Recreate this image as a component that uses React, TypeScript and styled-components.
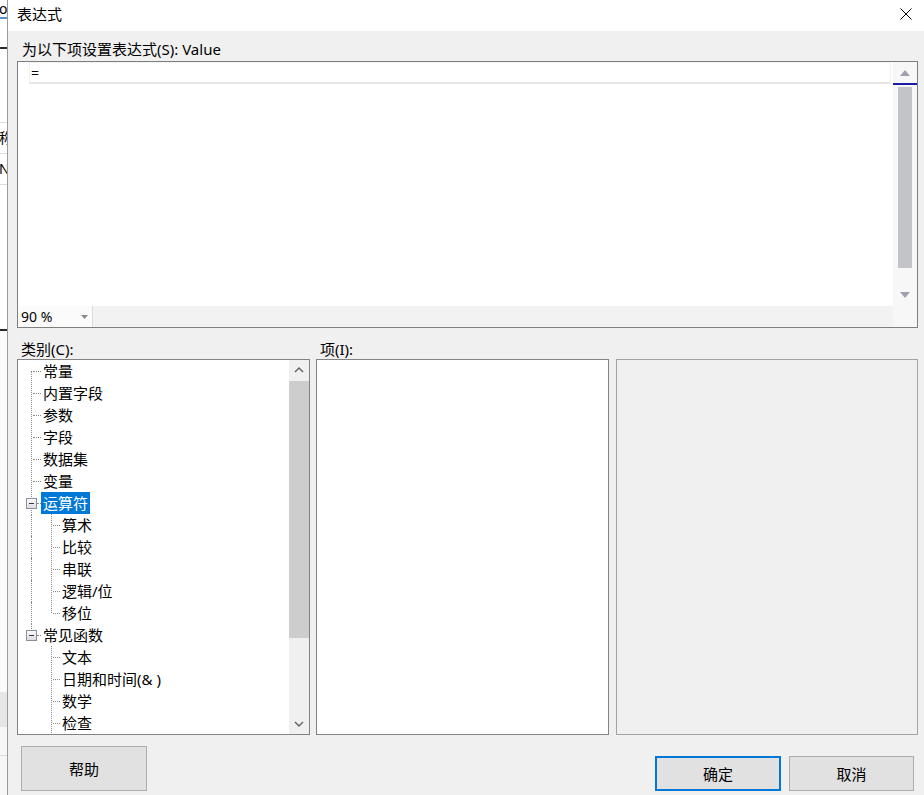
import React from 'react';
import styled, { createGlobalStyle } from 'styled-components';

const GlobalStyles = createGlobalStyle`
  html, body {
    margin: 0;
    padding: 0;
    width: 924px;
    height: 795px;
    overflow: hidden;
    background: #ffffff;
  }
  body {
    font-family: "Noto Sans", "Noto Sans CJK SC", sans-serif;
    font-size: 15px;
    color: #000000;
  }
  #root {
    height: 100%;
  }
`;

const Screen = styled.div`
  display: flex;
  width: 924px;
  height: 795px;
  overflow: hidden;
`;

/* sliver of the window behind the dialog */
const Backdrop = styled.div`
  width: 7px;
  flex-shrink: 0;
  overflow: hidden;
  display: flex;
  flex-direction: column;
  background: #ffffff;
`;

const BackText = styled.div<{ $h: number }>`
  height: ${p => p.$h}px;
  line-height: ${p => p.$h}px;
  font-size: 14px;
  white-space: nowrap;
  margin-left: -1px;
  color: #000;
`;

const BackBlock = styled.div<{ $h: number; $bg?: string }>`
  height: ${p => p.$h}px;
  flex-shrink: 0;
  background: ${p => p.$bg || '#ffffff'};
`;

const Dialog = styled.div`
  flex: 1;
  min-width: 0;
  display: flex;
  flex-direction: column;
  border-left: 1px solid #9a9a9a;
  background: #f0f0f0;
`;

const TitleBar = styled.div`
  height: 31px;
  flex-shrink: 0;
  box-sizing: border-box;
  padding: 0 12px 4px 9px;
  display: flex;
  align-items: center;
  justify-content: space-between;
  background: #ffffff;
`;

const TitleText = styled.span`
  font-size: 15px;
  line-height: 20px;
`;

const CloseButton = styled.span`
  display: flex;
  width: 12px;
  height: 12px;
`;

const Body = styled.div`
  flex: 1;
  display: flex;
  flex-direction: column;
  padding: 0 6px 0 9px;
`;

const PromptLabel = styled.div`
  padding: 8px 0 0 5px;
  height: 20px;
  line-height: 20px;
  margin-bottom: 2px;
  white-space: nowrap;
`;

const ExprBox = styled.div`
  height: 267px;
  box-sizing: border-box;
  border: 1px solid #7f7f7f;
  display: flex;
  background: #f7f7f7;
`;

const EditorColumn = styled.div`
  flex: 1;
  display: flex;
  flex-direction: column;
`;

const Editor = styled.div`
  flex: 1;
  background: #ffffff;
  padding: 0 2px 0 11px;
`;

const CurrentLine = styled.div`
  height: 22px;
  box-sizing: border-box;
  border: 1px solid #f2f2f2;
  border-bottom: 2px solid #e6e6e6;
  padding-left: 1px;
  font-size: 14px;
  line-height: 19px;
`;

const EditorFooter = styled.div`
  height: 21px;
  display: flex;
  background: #f2f2f2;
`;

const ZoomCombo = styled.div`
  width: 75px;
  box-sizing: border-box;
  display: flex;
  align-items: center;
  justify-content: space-between;
  padding: 0 4px 0 3px;
  background: #fbfbfb;
  border-right: 1px solid #dadada;
  font-size: 14px;
  line-height: 21px;
`;

const EditorScroll = styled.div`
  width: 24px;
  display: flex;
  flex-direction: column;
  background: #f7f7f7;
`;

const ScrollArrow = styled.div<{ $h: number }>`
  height: ${p => p.$h}px;
  flex-shrink: 0;
  display: flex;
  align-items: center;
  justify-content: center;
`;

const CaretLine = styled.div`
  height: 2px;
  flex-shrink: 0;
  background: #1b1ba8;
`;

const EditorTrack = styled.div`
  flex: 1;
  padding: 2px 5px 0 5px;
`;

const EditorThumb = styled.div`
  height: 181px;
  background: #c3c4ca;
`;

const Lower = styled.div`
  margin-top: 11px;
  display: grid;
  grid-template-columns: 293px 293px 1fr;
  grid-template-rows: 20px 376px;
  column-gap: 6px;
`;

const PaneLabel = styled.div`
  padding-left: 4px;
  line-height: 20px;
  white-space: nowrap;
`;

const TreeBox = styled.div`
  box-sizing: border-box;
  border: 1px solid #828282;
  background: #ffffff;
  display: flex;
  overflow: hidden;
`;

const TreeList = styled.div`
  flex: 1;
  overflow: hidden;
`;

const TreeRow = styled.div`
  display: flex;
  height: 22px;
`;

const Guide = styled.div<{ $line: boolean }>`
  width: 20px;
  flex-shrink: 0;
  position: relative;
  &::before {
    content: '';
    display: ${p => (p.$line ? 'block' : 'none')};
    position: absolute;
    left: 13px;
    top: 0;
    bottom: 0;
    border-left: 1px dotted #8a8a8a;
  }
`;

const Elbow = styled.div<{ $w: number; $up: boolean; $down: boolean; $box: boolean }>`
  width: ${p => p.$w}px;
  flex-shrink: 0;
  position: relative;
  &::before {
    content: '';
    position: absolute;
    left: 13px;
    top: ${p => (p.$up ? '0' : '11px')};
    bottom: ${p => (p.$down ? '-1px' : '11px')};
    border-left: 1px dotted #8a8a8a;
  }
  &::after {
    content: '';
    position: absolute;
    left: ${p => (p.$box ? '19px' : '15px')};
    right: 0;
    top: 11px;
    border-top: 1px dotted #8a8a8a;
  }
`;

const Expander = styled.span`
  position: absolute;
  z-index: 1;
  left: 8px;
  top: 6px;
  width: 11px;
  height: 11px;
  box-sizing: border-box;
  border: 1px solid #8e8f9c;
  background: linear-gradient(#fafafa, #dcdde4);
  &::before {
    content: '';
    position: absolute;
    left: 2px;
    right: 2px;
    top: 4px;
    height: 1px;
    background: #3a3a46;
  }
`;

const NodeLabel = styled.span<{ $selected?: boolean }>`
  padding: 0 2px;
  line-height: 22px;
  white-space: nowrap;
  background: ${p => (p.$selected ? '#0078d7' : 'transparent')};
  color: ${p => (p.$selected ? '#ffffff' : '#000000')};
`;

const TreeScroll = styled.div`
  width: 20px;
  flex-shrink: 0;
  display: flex;
  flex-direction: column;
  background: #f0f0f0;
`;

const TreeTrack = styled.div`
  flex: 1;
  padding-top: 1px;
`;

const TreeThumb = styled.div`
  height: 257px;
  background: #cdcdcd;
`;

const ItemsBox = styled.div`
  box-sizing: border-box;
  border: 1px solid #828282;
  background: #ffffff;
`;

const DescBox = styled.div`
  margin-left: 1px;
  box-sizing: border-box;
  border: 1px solid #a3a3a3;
  background: #f0f0f0;
`;

const ButtonRow = styled.div`
  display: flex;
  align-items: flex-start;
  padding: 0 4px;
  gap: 8px;
`;

const Spacer = styled.div`
  flex: 1;
`;

const DialogButton = styled.button<{ $top: number; $h: number; $w: number; $primary?: boolean }>`
  margin-top: ${p => p.$top}px;
  width: ${p => p.$w}px;
  height: ${p => p.$h}px;
  box-sizing: border-box;
  padding: 0;
  background: #e1e1e1;
  border: ${p => (p.$primary ? '2px solid #0078d7' : '1px solid #adadad')};
  font-family: "Noto Sans", "Noto Sans CJK SC", sans-serif;
  font-size: 15px;
  line-height: 20px;
  color: #000;
`;

type Node = {
  label: string;
  level: 1 | 2;
  up: boolean;
  down: boolean;
  box?: boolean;
  selected?: boolean;
  guide?: boolean;
};

const nodes: Node[] = [
  { label: '常量', level: 1, up: false, down: true },
  { label: '内置字段', level: 1, up: true, down: true },
  { label: '参数', level: 1, up: true, down: true },
  { label: '字段', level: 1, up: true, down: true },
  { label: '数据集', level: 1, up: true, down: true },
  { label: '变量', level: 1, up: true, down: true },
  { label: '运算符', level: 1, up: true, down: true, box: true, selected: true },
  { label: '算术', level: 2, up: true, down: true, guide: true },
  { label: '比较', level: 2, up: true, down: true, guide: true },
  { label: '串联', level: 2, up: true, down: true, guide: true },
  { label: '逻辑/位', level: 2, up: true, down: true, guide: true },
  { label: '移位', level: 2, up: true, down: false, guide: true },
  { label: '常见函数', level: 1, up: true, down: false, box: true },
  { label: '文本', level: 2, up: true, down: true },
  { label: '日期和时间(& )', level: 2, up: true, down: true },
  { label: '数学', level: 2, up: true, down: true },
  { label: '检查', level: 2, up: true, down: true },
];

const Triangle = ({ down }: { down?: boolean }) => (
  <svg width="10" height="6" viewBox="0 0 10 6">
    <polygon points={down ? '0,0 10,0 5,6' : '0,6 10,6 5,0'} fill="#a1a1ab" />
  </svg>
);

const Chevron = ({ down }: { down?: boolean }) => (
  <svg width="10" height="6" viewBox="0 0 10 6">
    <polyline
      points={down ? '1,1 5,5 9,1' : '1,5 5,1 9,5'}
      fill="none"
      stroke="#606060"
      strokeWidth="1.4"
    />
  </svg>
);

const App: React.FC = () => {
  return (
    <>
      <GlobalStyles />
      <Screen>
        <Backdrop>
          <BackText $h={17}>ou</BackText>
          <BackBlock $h={2} $bg="#5a8fcf" />
          <BackBlock $h={28} />
          <BackBlock $h={2} $bg="#2a2a2a" />
          <BackBlock $h={73} />
          <BackBlock $h={1} $bg="#dcdcdc" />
          <BackText $h={30}>称</BackText>
          <BackBlock $h={1} $bg="#dcdcdc" />
          <BackText $h={30}>Na</BackText>
          <BackBlock $h={1} $bg="#dcdcdc" />
          <BackBlock $h={144} />
          <BackBlock $h={2} $bg="#2a2a2a" />
          <BackBlock $h={361} $bg="#fbfbfb" />
          <BackBlock $h={35} $bg="#e6e6e6" />
          <BackBlock $h={28} $bg="#f7f7f7" />
          <BackBlock $h={1} $bg="#dcdcdc" />
          <BackBlock $h={40} $bg="#f7f7f7" />
        </Backdrop>

        <Dialog>
          <TitleBar>
            <TitleText>表达式</TitleText>
            <CloseButton>
              <svg width="12" height="12" viewBox="0 0 12 12">
                <path d="M0.5 0.5 L11.5 11.5 M11.5 0.5 L0.5 11.5" stroke="#000" strokeWidth="1" />
              </svg>
            </CloseButton>
          </TitleBar>

          <Body>
            <PromptLabel>为以下项设置表达式(S): Value</PromptLabel>
            <ExprBox>
              <EditorColumn>
                <Editor>
                  <CurrentLine>=</CurrentLine>
                </Editor>
                <EditorFooter>
                  <ZoomCombo>
                    <span>90 %</span>
                    <svg width="7" height="4" viewBox="0 0 7 4">
                      <polygon points="0,0 7,0 3.5,4" fill="#8a8a8a" />
                    </svg>
                  </ZoomCombo>
                </EditorFooter>
              </EditorColumn>
              <EditorScroll>
                <ScrollArrow $h={21}>
                  <Triangle />
                </ScrollArrow>
                <CaretLine />
                <EditorTrack>
                  <EditorThumb />
                </EditorTrack>
                <ScrollArrow $h={22}>
                  <Triangle down />
                </ScrollArrow>
                <ScrollArrow $h={21} />
              </EditorScroll>
            </ExprBox>

            <Lower>
              <PaneLabel>类别(C):</PaneLabel>
              <PaneLabel>项(I):</PaneLabel>
              <div />

              <TreeBox>
                <TreeList>
                  {nodes.map(n => (
                    <TreeRow key={n.label}>
                      {n.level === 2 && <Guide $line={!!n.guide} />}
                      <Elbow $w={n.level === 1 ? 23 : 22} $up={n.up} $down={n.down} $box={!!n.box}>
                        {n.box && <Expander />}
                      </Elbow>
                      <NodeLabel $selected={n.selected}>{n.label}</NodeLabel>
                    </TreeRow>
                  ))}
                </TreeList>
                <TreeScroll>
                  <ScrollArrow $h={20}>
                    <Chevron />
                  </ScrollArrow>
                  <TreeTrack>
                    <TreeThumb />
                  </TreeTrack>
                  <ScrollArrow $h={20}>
                    <Chevron down />
                  </ScrollArrow>
                </TreeScroll>
              </TreeBox>
              <ItemsBox />
              <DescBox />
            </Lower>

            <ButtonRow>
              <DialogButton $top={11} $h={45} $w={126}>帮助</DialogButton>
              <Spacer />
              <DialogButton $top={21} $h={35} $w={126} $primary>确定</DialogButton>
              <DialogButton $top={21} $h={35} $w={125}>取消</DialogButton>
            </ButtonRow>
          </Body>
        </Dialog>
      </Screen>
    </>
  );
};

export default App;
